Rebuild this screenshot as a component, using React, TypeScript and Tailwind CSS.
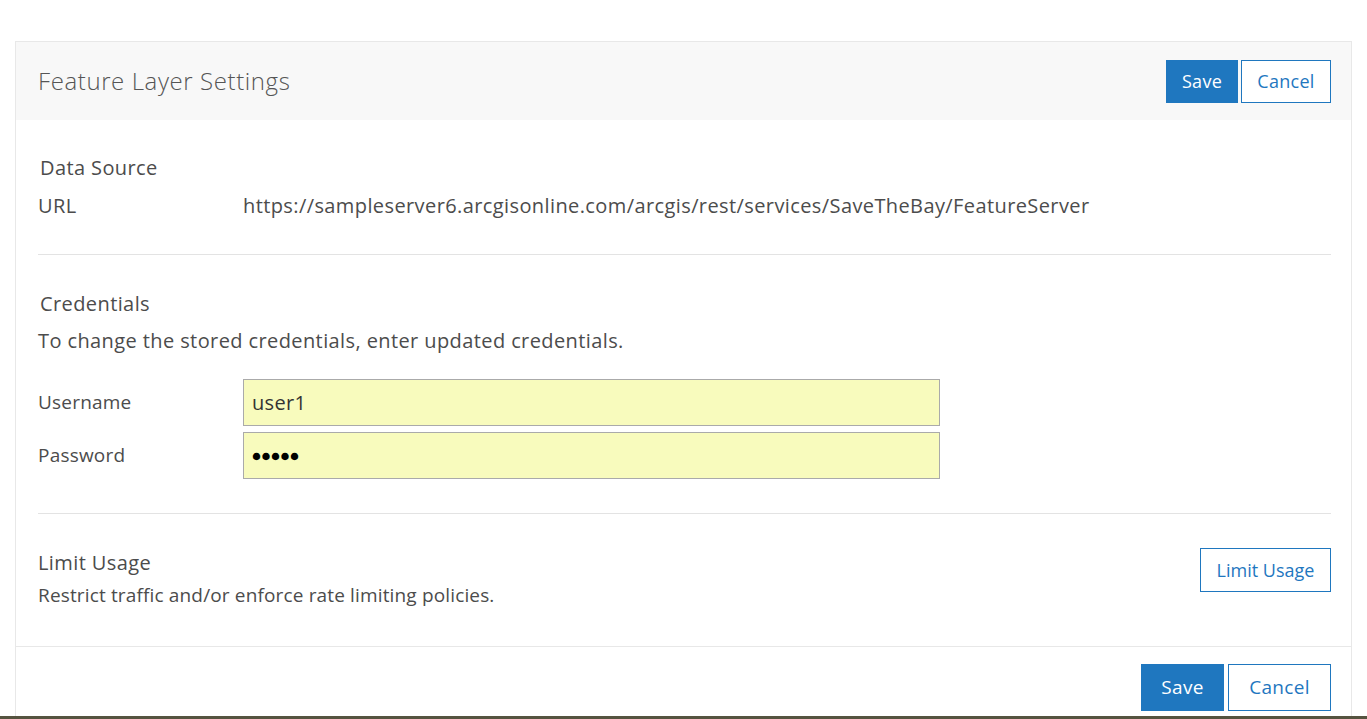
export default function App() {
  const font = { fontFamily: '"Open Sans", Lato, sans-serif' };
  return (
    <div className="flex h-[719px] flex-col overflow-hidden bg-white text-[#4c4c4c]" style={font}>
      <div className="flex flex-1 flex-col px-[15px] pt-[41px]">
        <div className="flex flex-1 flex-col border border-b-0 border-[#e8e8e8] bg-white">
          {/* Header */}
          <div className="flex h-[78px] items-center justify-between bg-[#f8f8f8] pl-[22px] pr-[20px]">
            <h1 className="text-[24px] font-light tracking-[0.6px] text-[#555]">Feature Layer Settings</h1>
            <div className="flex gap-[3px]">
              <button className="h-[43px] w-[72px] bg-[#1f77bf] text-[18px] tracking-[0.3px] text-white">Save</button>
              <button className="h-[43px] w-[90px] border border-[#1f77bf] bg-white text-[18px] tracking-[0.3px] text-[#1f77bf]">Cancel</button>
            </div>
          </div>

          {/* Body */}
          <div className="flex flex-1 flex-col pl-[22px] pr-[20px] tracking-[0.4px]">
            <section className="border-b border-[#e3e3e3] pb-[34px] pt-[34px]">
              <h2 className="pl-[2px] text-[20px] leading-[28px]">Data Source</h2>
              <div className="mt-[10px] flex text-[20px] leading-[28px]">
                <span className="w-[205px]">URL</span>
                <span>https://sampleserver6.arcgisonline.com/arcgis/rest/services/SaveTheBay/FeatureServer</span>
              </div>
            </section>

            <section className="border-b border-[#e3e3e3] pb-[34px] pt-[35px]">
              <h2 className="pl-[2px] text-[20px] leading-[28px]">Credentials</h2>
              <p className="mt-[9px] text-[20px] leading-[28px]">To change the stored credentials, enter updated credentials.</p>
              <div className="mt-[24px] flex flex-col gap-[6px]">
                <div className="flex items-center">
                  <label className="w-[205px] text-[19px] tracking-[0.2px]">Username</label>
                  <div className="flex h-[47px] w-[697px] items-center border border-[#aaa] bg-[#f8fbbd] px-[8px] text-[20px] tracking-[0.3px] text-[#333]">user1</div>
                </div>
                <div className="flex items-center">
                  <label className="w-[205px] text-[19px] tracking-[0.2px]">Password</label>
                  <div className="flex h-[47px] w-[697px] items-center border border-[#aaa] bg-[#f8fbbd] px-[8px] text-[15px] tracking-[0.5px] text-black">●●●●●</div>
                </div>
              </div>
            </section>

            <section className="flex items-start justify-between pb-[36px] pt-[34px]">
              <div className="pt-[1px]">
                <h2 className="text-[20px] leading-[28px]">Limit Usage</h2>
                <p className="mt-[4px] text-[19px] leading-[28px] tracking-[0.15px]">Restrict traffic and/or enforce rate limiting policies.</p>
              </div>
              <button className="h-[44px] w-[131px] border border-[#1f77bf] bg-white text-[18px] tracking-[0px] text-[#1f77bf]">Limit Usage</button>
            </section>
          </div>

          {/* Footer */}
          <div className="flex h-[70px] justify-end gap-[4px] border-t border-[#e8e8e8] pr-[20px] pt-[17px]">
            <button className="h-[47px] w-[83px] bg-[#1f77bf] text-[19px] tracking-[0.3px] text-white">Save</button>
            <button className="h-[47px] w-[103px] border border-[#1f77bf] bg-white text-[19px] tracking-[0.3px] text-[#1f77bf]">Cancel</button>
          </div>
        </div>
      </div>
      <div className="h-[3px] bg-[#55533f]" />
    </div>
  );
}
